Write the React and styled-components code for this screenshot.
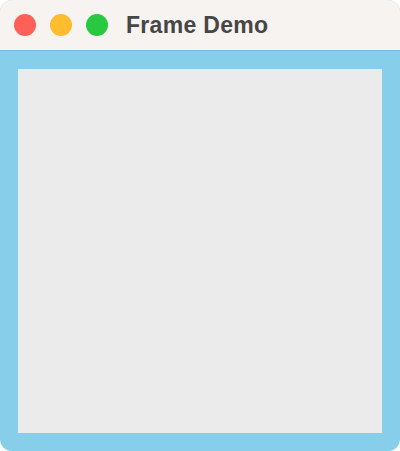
import React from "react";
import styled, { createGlobalStyle } from "styled-components";

const GlobalStyle = createGlobalStyle`
  html, body {
    margin: 0;
    padding: 0;
    background: #ffffff;
  }
  body {
    font-family: "Liberation Sans", Arial, sans-serif;
  }
`;

const Window = styled.div`
  width: 400px;
  height: 451px;
  border-radius: 12px;
  overflow: hidden;
  display: flex;
  flex-direction: column;
  background: #87ceeb;
`;

const TitleBar = styled.div`
  height: 50px;
  flex: 0 0 50px;
  display: flex;
  align-items: center;
  padding-left: 14px;
  background: #f7f3f1;
  border-bottom: 1px solid #74bcdc;
`;

const Lights = styled.div`
  display: flex;
  gap: 14px;
  margin-right: 18px;
`;

const Light = styled.span`
  width: 22px;
  height: 22px;
  border-radius: 50%;
  background: ${(p) => p.color};
`;

const Title = styled.h1`
  margin: 0;
  font-size: 23px;
  font-weight: bold;
  color: #464646;
  letter-spacing: 0.3px;
`;

const Frame = styled.div`
  flex: 1;
  padding: 18px;
  display: flex;
`;

const Panel = styled.div`
  flex: 1;
  background: #ebebeb;
`;

export default function App() {
  return (
    <>
      <GlobalStyle />
      <Window>
        <TitleBar>
          <Lights>
            <Light color="#fe5f57" />
            <Light color="#febc2e" />
            <Light color="#28c840" />
          </Lights>
          <Title>Frame Demo</Title>
        </TitleBar>
        <Frame>
          <Panel />
        </Frame>
      </Window>
    </>
  );
}
